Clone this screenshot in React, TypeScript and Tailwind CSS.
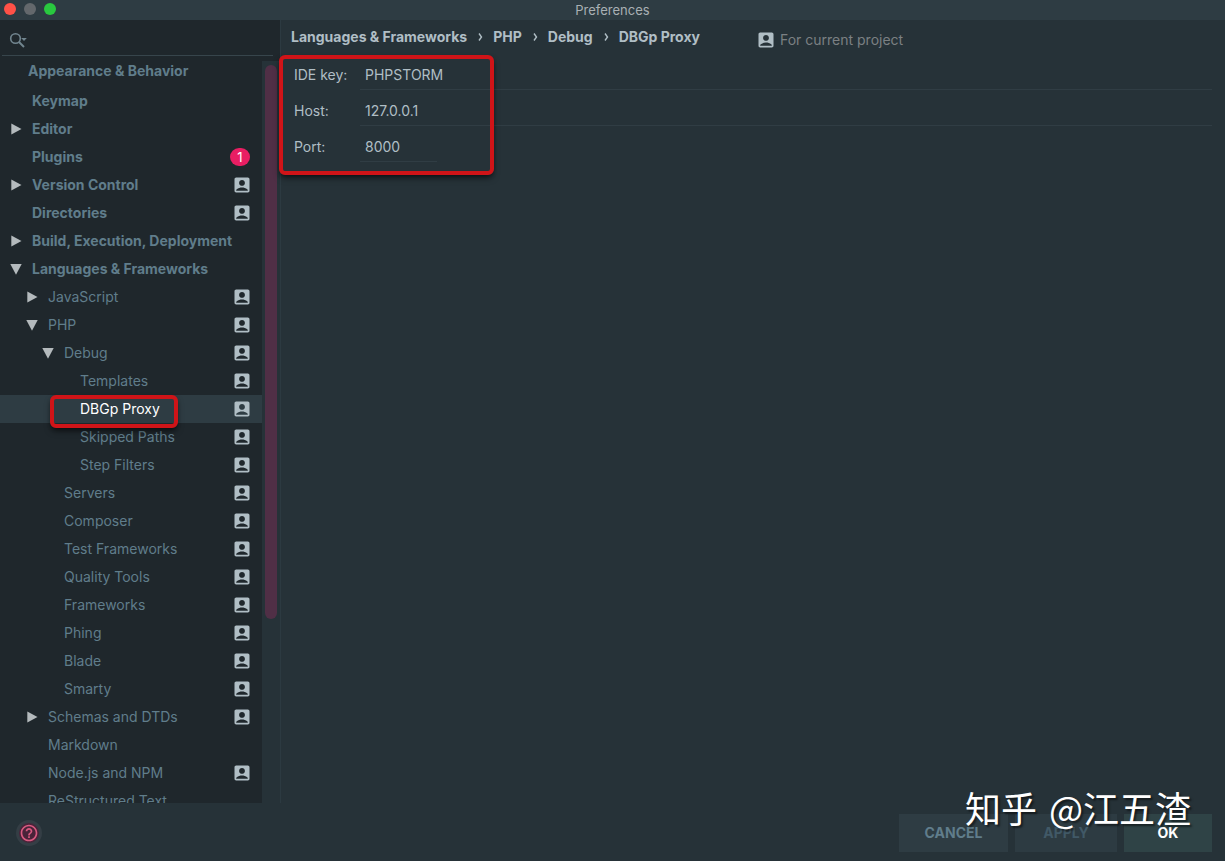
import { useState } from "react";
import clsx from "clsx";
import { MdAccountBox, MdHelpOutline } from "react-icons/md";

interface TreeItem {
  label: string;
  level: number;
  arrow?: "right" | "down";
  project?: boolean;
  badge?: string;
  marked?: boolean;
}

const ITEMS: TreeItem[] = [
  { label: "Keymap", level: 0 },
  { label: "Editor", level: 0, arrow: "right" },
  { label: "Plugins", level: 0, badge: "1" },
  { label: "Version Control", level: 0, arrow: "right", project: true },
  { label: "Directories", level: 0, project: true },
  { label: "Build, Execution, Deployment", level: 0, arrow: "right" },
  { label: "Languages & Frameworks", level: 0, arrow: "down" },
  { label: "JavaScript", level: 1, arrow: "right", project: true },
  { label: "PHP", level: 1, arrow: "down", project: true },
  { label: "Debug", level: 2, arrow: "down", project: true },
  { label: "Templates", level: 3, project: true },
  { label: "DBGp Proxy", level: 3, project: true, marked: true },
  { label: "Skipped Paths", level: 3, project: true },
  { label: "Step Filters", level: 3, project: true },
  { label: "Servers", level: 2, project: true },
  { label: "Composer", level: 2, project: true },
  { label: "Test Frameworks", level: 2, project: true },
  { label: "Quality Tools", level: 2, project: true },
  { label: "Frameworks", level: 2, project: true },
  { label: "Phing", level: 2, project: true },
  { label: "Blade", level: 2, project: true },
  { label: "Smarty", level: 2, project: true },
  { label: "Schemas and DTDs", level: 1, arrow: "right", project: true },
  { label: "Markdown", level: 1 },
  { label: "Node.js and NPM", level: 1, project: true },
  { label: "ReStructured Text", level: 1 },
];

const INDENT = ["pl-2", "pl-6", "pl-10", "pl-14"];

const CRUMBS = ["Languages & Frameworks", "PHP", "Debug", "DBGp Proxy"];

function Arrow({ dir }: { dir?: "right" | "down" }) {
  return (
    <svg viewBox="0 0 16 16" className="w-4 h-4 mr-2 shrink-0 fill-[#b4babd]">
      {dir === "right" && <path d="M3.3 2.5v11L13.5 8z" />}
      {dir === "down" && <path d="M2.3 3h11.4L8 13.8z" />}
    </svg>
  );
}

function SearchIcon() {
  return (
    <svg viewBox="0 0 20 18" className="w-5 h-[18px] shrink-0" fill="none" stroke="#71858f" strokeWidth="1.6">
      <circle cx="7.5" cy="7.5" r="4.8" />
      <path d="M11 11l5 5" strokeWidth="2" />
      <path d="M13.2 7h5.6l-2.8 3z" fill="#71858f" stroke="none" />
    </svg>
  );
}

function TreeRow({ item, selected, onSelect }: { item: TreeItem; selected: boolean; onSelect: () => void }) {
  return (
    <li className="relative">
      <button
        onClick={onSelect}
        className={clsx(
          "flex items-center w-full h-7 pr-[10px] text-left",
          INDENT[item.level],
          item.level === 0 && "font-bold",
          selected ? "bg-[#2e3c43] text-white" : "text-[#607d8b]"
        )}
      >
        <Arrow dir={item.arrow} />
        <span className="flex-1 whitespace-nowrap">{item.label}</span>
        {item.project && <MdAccountBox className="w-5 h-5 shrink-0 text-[#b0bec5]" />}
        {item.badge && (
          <span className="flex items-center justify-center w-5 h-[18px] mr-0.5 rounded-full bg-[#e91e63] text-white text-[13px] font-normal">
            {item.badge}
          </span>
        )}
      </button>
      {item.marked && (
        <div className="absolute z-10 left-[50px] top-0 w-32 h-[33px] rounded-md border-4 border-[#d01418] shadow-md shadow-black/50 pointer-events-none" />
      )}
    </li>
  );
}

function Sidebar() {
  const [selected, setSelected] = useState("DBGp Proxy");

  return (
    <aside className="flex flex-col w-[281px] shrink-0 min-h-0 bg-[#1f272c] border-r border-[#2c3a41]">
      <label className="flex items-center h-9 ml-0.5 mr-[7px] pl-1.5 pt-1 border-b border-[#37454c] shrink-0">
        <SearchIcon />
        <input type="text" aria-label="Search" className="flex-1 min-w-0 bg-transparent outline-none text-[#b0bec5]" />
      </label>
      <div className="flex flex-1 min-h-0">
        <nav className="flex-1 min-w-0 overflow-hidden">
          <h2 className="flex items-center h-[30px] mb-px pl-7 font-bold text-[#607d8b]">Appearance &amp; Behavior</h2>
          <ul>
            {ITEMS.map((item) => (
              <TreeRow
                key={item.label}
                item={item}
                selected={item.label === selected}
                onSelect={() => setSelected(item.label)}
              />
            ))}
          </ul>
        </nav>
        {/* scrollbar */}
        <div className="w-[18px] mt-[5px] pt-1 pl-[3px] bg-[#263238]">
          <div className="w-3 h-3/4 rounded-md bg-[#502f46]" />
        </div>
      </div>
    </aside>
  );
}

function Field({ id, label, value, short }: { id: string; label: string; value: string; short?: boolean }) {
  return (
    <div className="flex items-center">
      <label htmlFor={id} className="w-[66px] shrink-0">
        {label}
      </label>
      <input
        id={id}
        type="text"
        defaultValue={value}
        className={clsx(
          "h-[30px] px-[5px] bg-transparent border-b border-[#303d44] outline-none",
          short ? "w-[77px]" : "flex-1 min-w-0"
        )}
      />
    </div>
  );
}

function TitleBar() {
  return (
    <header className="relative flex items-center justify-center h-5 shrink-0 bg-[#2e3c43] text-[13px] text-[#a9b0b4]">
      <div className="absolute left-1 top-[3px] flex gap-2">
        <span className="w-3 h-3 rounded-full bg-[#ff5147]" />
        <span className="w-3 h-3 rounded-full bg-[#63686c]" />
        <span className="w-3 h-3 rounded-full bg-[#29c83f]" />
      </div>
      <h1>Preferences</h1>
    </header>
  );
}

export default function App() {
  return (
    <div className="flex flex-col h-screen overflow-hidden bg-[#263238] font-['Inter',sans-serif] text-sm text-[#b0bec5]">
      <TitleBar />

      <div className="flex flex-1 min-h-0">
        <Sidebar />

        <main className="flex-1 min-w-0">
          <div className="flex items-center h-[34px] pl-[10px]">
            <ol className="flex items-center font-bold whitespace-nowrap">
              {CRUMBS.map((crumb, i) => (
                <li key={crumb} className="flex items-center">
                  {i > 0 && (
                    <svg viewBox="0 0 8 10" className="w-2 h-[10px] mx-[9px]" fill="none" stroke="#b0bec5" strokeWidth="1.4">
                      <path d="M3 1.5L5.5 5 3 8.5" />
                    </svg>
                  )}
                  {crumb}
                </li>
              ))}
            </ol>
            <div className="flex items-center ml-14 mt-1.5 text-[#7b8083] whitespace-nowrap">
              <MdAccountBox className="w-5 h-5 mr-1 text-[#b0bec5]" />
              For current project
            </div>
          </div>

          <form className="relative flex flex-col gap-1.5 pt-1.5 pl-[13px] pr-[13px]">
            <Field id="ide-key" label="IDE key:" value="PHPSTORM" />
            <Field id="host" label="Host:" value="127.0.0.1" />
            <Field id="port" label="Port:" value="8000" short />
            <div className="absolute z-10 -left-0.5 top-px w-[215px] h-[120px] rounded-md border-4 border-[#d01418] shadow-md shadow-black/50 pointer-events-none" />
          </form>
        </main>
      </div>

      <footer className="relative flex items-center justify-between h-[58px] pt-0.5 shrink-0 pl-4 pr-[13px]">
        <button aria-label="Help" className="flex items-center justify-center w-[26px] h-[26px] rounded-full bg-[#343e45]">
          <MdHelpOutline className="w-5 h-5 rounded-full bg-[#4a2339] text-[#d85a80]" />
        </button>
        <div className="flex gap-[7px] font-bold">
          <button className="w-[109px] h-[38px] bg-[#2e3c43] text-[#607d8b]">CANCEL</button>
          <button className="w-[102px] h-[38px] bg-[#2d3b42] text-[#415967]" disabled>
            APPLY
          </button>
          <button className="w-[88px] h-[38px] bg-[#2f4346] text-white">OK</button>
        </div>
        <div className="absolute right-[34px] bottom-7 flex gap-3 text-[36px] leading-[52px] text-white whitespace-nowrap pointer-events-none font-['Noto_Sans_CJK_SC',sans-serif] [text-shadow:2px_2px_2px_rgba(0,0,0,0.5)]">
          <span>知乎</span>
          <span>@江五渣</span>
        </div>
      </footer>
    </div>
  );
}
